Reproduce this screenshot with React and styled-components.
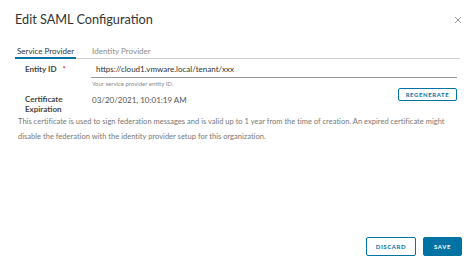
import React from 'react';
import styled, { createGlobalStyle, css } from 'styled-components';

const GlobalStyle = createGlobalStyle`
  * { box-sizing: border-box; }
  html, body { margin: 0; padding: 0; background: #fff; }
  body { font-family: Lato, "Open Sans", sans-serif; color: #313131; }
`;

const Modal = styled.div`
  width: 474px;
  height: 268px;
  display: flex;
  flex-direction: column;
  padding: 10px 12px 12px 15px;
  background: white;
`;

const Header = styled.div`
  display: flex;
  align-items: center;
  justify-content: space-between;
  height: 17px;
`;

const Title = styled.h3`
  margin: 0;
  font-size: 12.7px;
  font-weight: 400;
  color: #333;
`;

const CloseButton = styled.button`
  border: none;
  background: none;
  padding: 0;
  width: 8px;
  height: 8px;
  margin-top: 3px;
  display: flex;
  align-items: center;
  justify-content: center;
  color: #8a8a8a;
`;

const Tabs = styled.div`
  display: flex;
  gap: 14px;
  margin-top: 16px;
  margin-right: 2px;
  border-bottom: 1px solid #d0d0d0;
`;

const Tab = styled.div`
  font-size: 8px;
  line-height: 10px;
  padding: 3px 2px 1px;
  color: #8c8c8c;
  border-bottom: 2px solid transparent;
  margin-bottom: -1px;

  ${props => props.active && css`
    color: #333;
    border-bottom-color: #0072a3;
  `}
`;

const Form = styled.div`
  display: grid;
  grid-template-columns: 66px 1fr;
  margin-top: 4px;
  padding-left: 10px;
  padding-right: 5px;
`;

const Label = styled.div`
  font-size: 8px;
  line-height: 9.5px;
  font-weight: 700;
  color: #454545;
  padding-top: 2px;
  margin-top: ${props => props.offset || 0}px;
`;

const Required = styled.span`
  color: #c92100;
  margin-left: 6px;
  font-weight: 400;
`;

const Field = styled.div`
  display: flex;
  flex-direction: column;
`;

const Input = styled.div`
  font-size: 8px;
  line-height: 10px;
  color: #333;
  padding: 1px 0 3px 5px;
  border-bottom: 1px solid #9a9a9a;
`;

const Helper = styled.div`
  font-size: 6px;
  line-height: 8px;
  color: #8c8c8c;
  margin-top: 2px;
  padding-left: 1px;
`;

const ValueRow = styled.div`
  display: flex;
  justify-content: space-between;
  align-items: flex-start;
`;

const Value = styled.div`
  font-size: 8px;
  line-height: 10px;
  color: #555;
  padding-top: 7px;
  padding-left: 1px;
`;

const Button = styled.button`
  font-family: Lato, "Open Sans", sans-serif;
  font-size: 6px;
  font-weight: 700;
  letter-spacing: 0.6px;
  text-transform: uppercase;
  border: 1px solid #0072a3;
  border-radius: 2px;
  background: white;
  color: #0072a3;
  padding: 0;
  height: ${props => props.small ? '13px' : '19px'};
  width: ${props => props.width}px;

  ${props => props.primary && css`
    background: #0072a3;
    color: white;
  `}
`;

const Description = styled.p`
  margin: 0 0 0 3px;
  font-size: 7.5px;
  letter-spacing: 0.02px;
  line-height: 15px;
  color: #777;
`;

const Footer = styled.div`
  margin-top: auto;
  display: flex;
  justify-content: flex-end;
  gap: 7px;
`;

export default function App() {
  return (
    <>
      <GlobalStyle />
      <Modal>
        <Header>
          <Title>Edit SAML Configuration</Title>
          <CloseButton aria-label="Close">
            <svg width="8" height="8" viewBox="0 0 8 8">
              <path d="M1 1 L7 7 M7 1 L1 7" stroke="currentColor" strokeWidth="0.9" />
            </svg>
          </CloseButton>
        </Header>
        <Tabs>
          <Tab active>Service Provider</Tab>
          <Tab>Identity Provider</Tab>
        </Tabs>
        <Form>
          <Label>Entity ID<Required>*</Required></Label>
          <Field>
            <Input>https://cloud1.vmware.local/tenant/xxx</Input>
            <Helper>Your service provider entity ID.</Helper>
          </Field>
          <Label offset={5}>Certificate<br />Expiration</Label>
          <ValueRow>
            <Value>03/20/2021, 10:01:19 AM</Value>
            <Button small width={59}>Regenerate</Button>
          </ValueRow>
        </Form>
        <Description>
          This certificate is used to sign federation messages and is valid up to 1 year from the time of creation. An expired certificate might disable the federation with the identity provider setup for this organization.
        </Description>
        <Footer>
          <Button width={50}>Discard</Button>
          <Button primary width={39}>Save</Button>
        </Footer>
      </Modal>
    </>
  );
}
